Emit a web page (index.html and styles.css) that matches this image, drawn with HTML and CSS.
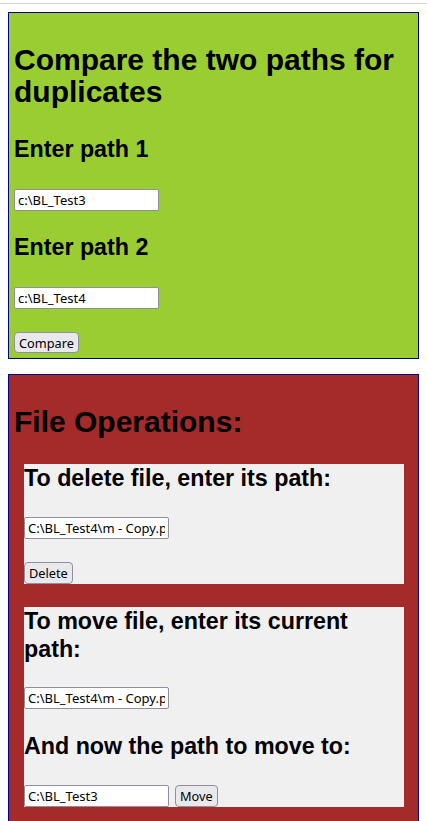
FILE: index.html
```html
<!DOCTYPE html>
<html lang="en">
<head>
<meta charset="utf-8">
<title>Compare paths</title>
<link rel="stylesheet" href="styles.css">
</head>
<body>
<div class="topline"></div>
<div class="page">
  <section class="box box-compare">
    <h1 class="title">Compare the two paths for duplicates</h1>
    <h2 class="label gap-27">Enter path 1</h2>
    <input class="field gap-26" type="text" value="c:\BL_Test3">
    <h2 class="label gap-22">Enter path 2</h2>
    <input class="field gap-26" type="text" value="c:\BL_Test4">
    <button class="btn btn-compare gap-23" type="button">Compare</button>
  </section>

  <section class="box box-ops">
    <h1 class="title">File Operations:</h1>
    <div class="panel gap-26">
      <h2 class="label">To delete file, enter its path:</h2>
      <input class="field gap-25" type="text" value="C:\BL_Test4\m - Copy.png">
      <button class="btn gap-23" type="button">Delete</button>
    </div>
    <div class="panel panel-last gap-23">
      <h2 class="label">To move file, enter its current path:</h2>
      <input class="field gap-24" type="text" value="C:\BL_Test4\m - Copy.png">
      <h2 class="label gap-23">And now the path to move to:</h2>
      <div class="row gap-25">
        <input class="field" type="text" value="C:\BL_Test3">
        <button class="btn" type="button">Move</button>
      </div>
    </div>
  </section>
</div>
</body>
</html>
```

FILE: styles.css
```css
html, body {
  margin: 0;
  padding: 0;
  background: #ffffff;
}

body {
  font-family: "Liberation Sans", Arial, sans-serif;
  color: #000000;
}

.topline {
  height: 3px;
  border-bottom: 1px solid #d4d4d6;
}

.page {
  padding: 8px 8px 8px 8px;
  display: flex;
  flex-direction: column;
}

.box {
  border: 1px solid #00008b;
  padding: 31px 5px 5px 5px;
  display: flex;
  flex-direction: column;
  align-items: flex-start;
}

.box-compare {
  background: #9acd32;
}

.box-ops {
  background: #a52a2a;
  margin-top: 15px;
}

.title {
  margin: 0;
  font-family: "Liberation Sans", Arial, sans-serif;
  font-weight: bold;
  font-size: 30px;
  line-height: 32px;
}

.label {
  margin: 0;
  font-family: "Liberation Sans", Arial, sans-serif;
  font-weight: bold;
  font-size: 23.25px;
  line-height: 28px;
}

.panel {
  background: #f0f0f0;
  width: 380px;
  margin-left: 10px;
  display: flex;
  flex-direction: column;
  align-items: flex-start;
}

.panel-last {
  margin-bottom: 10px;
}

.field {
  box-sizing: border-box;
  width: 145px;
  height: 22px;
  margin: 0;
  padding: 0 3px;
  border: 1px solid #8f8f9d;
  border-radius: 2px;
  background: #ffffff;
  color: #000000;
  font-family: "Noto Sans", "Open Sans", sans-serif;
  font-size: 13px;
  outline: none;
}

.btn {
  box-sizing: border-box;
  height: 22px;
  margin: 0;
  padding: 0 4px;
  border: 1px solid #8f8f9d;
  border-radius: 4px;
  background: #e9e9ed;
  color: #000000;
  font-family: "Noto Sans", "Open Sans", sans-serif;
  font-size: 12.75px;
  line-height: 18px;
}

.btn-compare {
  height: 21px;
}

.row {
  display: flex;
  align-items: flex-start;
  gap: 6px;
}

.gap-22 { margin-top: 22px; }
.gap-23 { margin-top: 23px; }
.gap-24 { margin-top: 24px; }
.gap-25 { margin-top: 25px; }
.gap-26 { margin-top: 26px; }
.gap-27 { margin-top: 27px; }
```
